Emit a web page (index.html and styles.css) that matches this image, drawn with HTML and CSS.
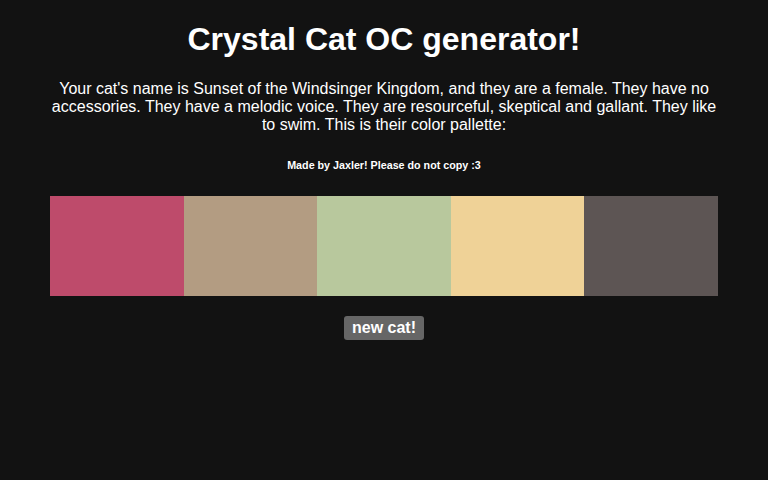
FILE: index.html
```html
<!DOCTYPE html>
<html>
<head>
<meta charset="utf-8">
<link rel="stylesheet" href="styles.css">
</head>
<body>
<main class="page">
  <h1 class="title">Crystal Cat OC generator!</h1>
  <p class="desc">Your cat's name is Sunset of the Windsinger Kingdom, and they are a female. They have no accessories. They have a melodic voice. They are resourceful, skeptical and gallant. They like to swim. This is their color pallette:</p>
  <h6 class="credit">Made by Jaxler! Please do not copy :3</h6>
  <div class="palette">
    <div class="swatch s1"></div>
    <div class="swatch s2"></div>
    <div class="swatch s3"></div>
    <div class="swatch s4"></div>
    <div class="swatch s5"></div>
  </div>
  <div class="actions"><button class="btn">new cat!</button></div>
</main>
</body>
</html>
```

FILE: styles.css
```css
html, body {
  margin: 0;
  background: #121212;
  color: #ffffff;
  font-family: "Liberation Sans", Arial, sans-serif;
}
.page {
  padding: 0 50px;
  text-align: center;
}
.title {
  font-size: 32px;
  font-weight: bold;
  margin: 21px 0;
  line-height: 37px;
}
.desc {
  font-size: 16px;
  line-height: 18px;
  margin: 22px -2px 16px;
}
.credit {
  font-size: 10.72px;
  font-weight: bold;
  margin: 25px 0 25px;
  line-height: 12px;
}
.palette {
  display: flex;
  height: 100px;
}
.swatch { flex: 1; }
.s1 { background: #be4b6b; }
.s2 { background: #b39c82; }
.s3 { background: #b8c89d; }
.s4 { background: #efd297; }
.s5 { background: #5d5554; }
.actions {
  margin-top: 20px;
}
.btn {
  font-family: "Liberation Sans", Arial, sans-serif;
  font-size: 16px;
  font-weight: bold;
  color: #ffffff;
  background: #666666;
  border: none;
  border-radius: 3px;
  padding: 0 8px;
  height: 24px;
  line-height: 24px;
}
```
